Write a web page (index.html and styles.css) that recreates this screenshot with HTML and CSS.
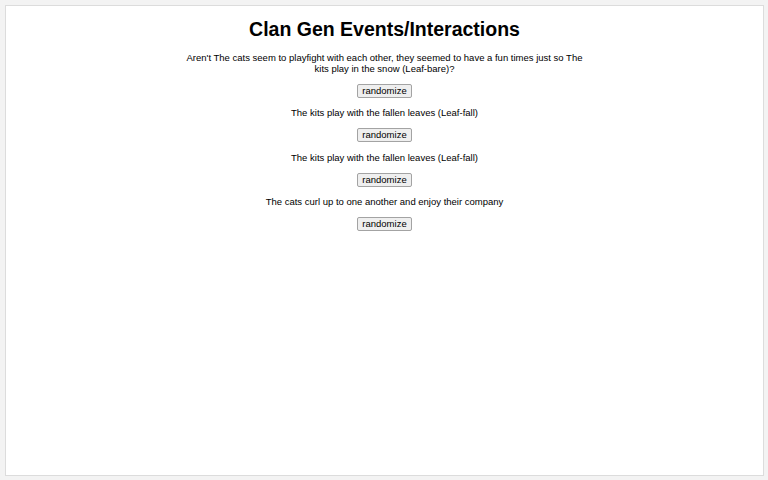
FILE: index.html
```html
<!DOCTYPE html>
<html lang="en">
<head>
<meta charset="utf-8">
<title>Clan Gen Events/Interactions</title>
<link rel="stylesheet" href="styles.css">
</head>
<body>
<main class="card">
  <h1 class="title">Clan Gen Events/Interactions</h1>
  <section class="event">
    <p class="event-text">Aren't The cats seem to playfight with each other, they seemed to have a fun times just so The kits play in the snow (Leaf-bare)?</p>
    <button class="randomize" type="button">randomize</button>
  </section>
  <section class="event">
    <p class="event-text">The kits play with the fallen leaves (Leaf-fall)</p>
    <button class="randomize" type="button">randomize</button>
  </section>
  <section class="event">
    <p class="event-text">The kits play with the fallen leaves (Leaf-fall)</p>
    <button class="randomize" type="button">randomize</button>
  </section>
  <section class="event">
    <p class="event-text">The cats curl up to one another and enjoy their company</p>
    <button class="randomize" type="button">randomize</button>
  </section>
</main>
</body>
</html>
```

FILE: styles.css
```css
html, body {
  margin: 0;
  height: 100%;
}

body {
  background: #f3f3f3;
  padding: 5px 4px 4px 5px;
  box-sizing: border-box;
  font-family: "Liberation Sans", Arial, sans-serif;
  color: #000;
}

.card {
  height: 100%;
  box-sizing: border-box;
  background: #fff;
  border: 1px solid #dcdcdc;
  display: flex;
  flex-direction: column;
  align-items: center;
  padding-top: 11px;
}

.title {
  margin: 0 0 11px;
  font-size: 19.5px;
  line-height: 24px;
  font-weight: bold;
}

.event {
  display: flex;
  flex-direction: column;
  align-items: center;
  gap: 10px;
  margin-bottom: 9.3px;
}

.event-text {
  margin: 0;
  max-width: 400px;
  text-align: center;
  font-size: 9.5px;
  line-height: 11px;
}

.randomize {
  font-family: "Liberation Sans", Arial, sans-serif;
  font-size: 9.5px;
  line-height: 12px;
  padding: 0 4px;
  background: #efefef;
  border: 1px solid #a3a3a3;
  border-radius: 2px;
  color: #000;
}
```
